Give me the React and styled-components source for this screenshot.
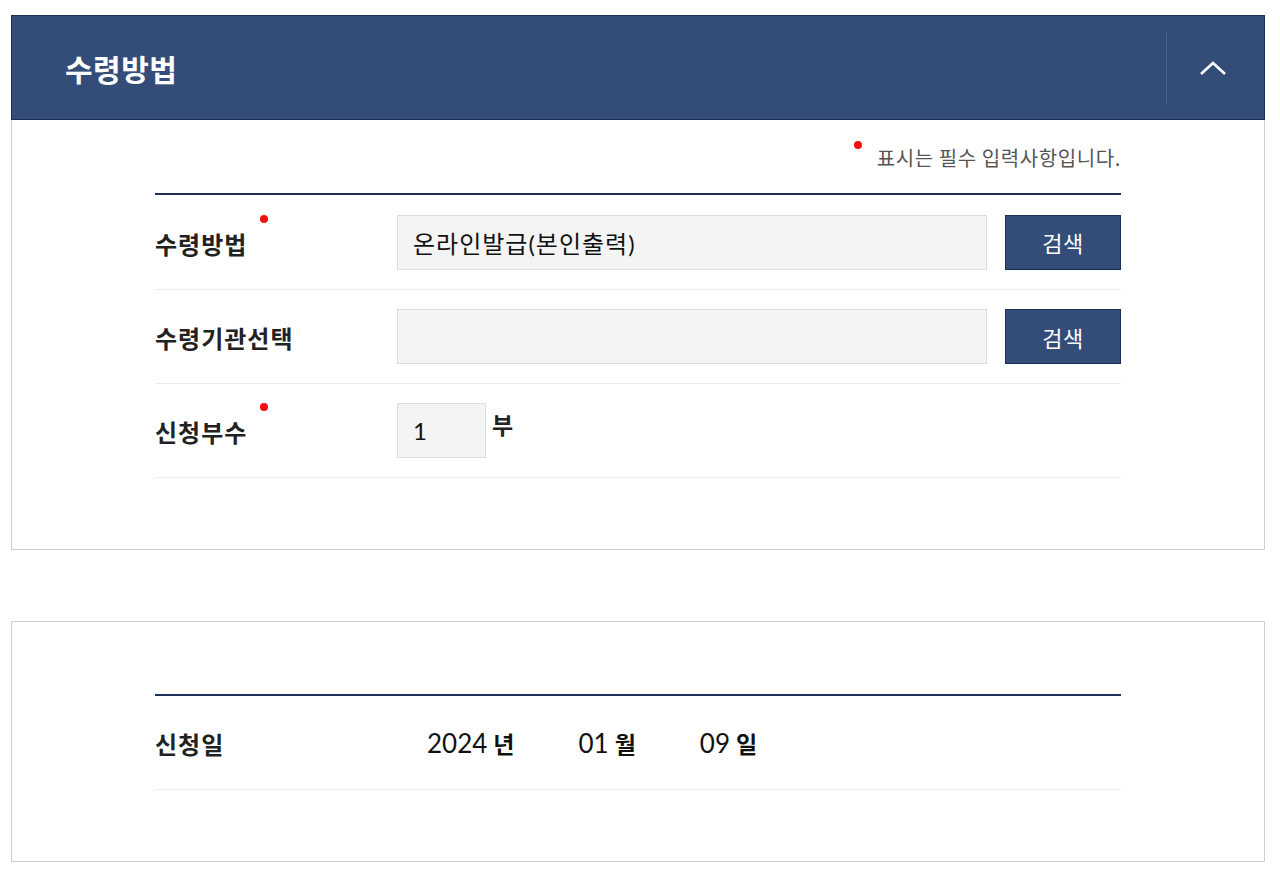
import React from 'react';
import styled, { createGlobalStyle } from 'styled-components';

const GlobalStyle = createGlobalStyle`
  body {
    margin: 0;
    background: #fff;
    font-family: "Lato", "Noto Sans CJK KR", sans-serif;
    color: #111;
  }
`;

const Page = styled.div`
  padding: 15px 15px 10px 11px;
  display: flex;
  flex-direction: column;
  gap: 71px;
`;

const Panel = styled.section`
  border: 1px solid #cfcfcf;
  border-top: ${p => (p.$hasHeader ? 'none' : '1px solid #cfcfcf')};
`;

const Header = styled.div`
  height: 105px;
  background: #344d78;
  border: 1px solid #1b2f55;
  margin: 0 -1px;
  display: flex;
  align-items: center;
  box-sizing: border-box;

  h2 {
    flex: 1;
    margin: 0;
    padding-left: 53px;
    color: #fff;
    font-family: "Noto Sans CJK KR", sans-serif;
    font-size: 30px;
    font-weight: 700;
    letter-spacing: 0.5px;
  }
`;

const Toggle = styled.button`
  width: 98px;
  height: 72px;
  border: none;
  border-left: 1px solid #47618a;
  background: transparent;
  display: flex;
  align-items: center;
  justify-content: center;
  padding: 0 6px 0 0;
  cursor: pointer;
`;

const Body = styled.div`
  width: 966px;
  margin: 0 auto;
  padding: ${p => (p.$top ? p.$top : '72px')} 0 71px;
`;

const Note = styled.p`
  margin: 0 0 19px;
  text-align: right;
  font-family: "Noto Sans CJK KR", sans-serif;
  font-size: 20px;
  color: #555;
  letter-spacing: 0.6px;
  line-height: 33px;
`;

const Dot = styled.span`
  display: inline-block;
  width: 8px;
  height: 8px;
  border-radius: 50%;
  background: #f01010;
  vertical-align: top;
  margin: 0 15px 0 0;
`;

const Table = styled.div`
  border-top: 2px solid #1d3158;
`;

const Row = styled.div`
  display: flex;
  align-items: center;
  min-height: ${p => p.$h || '94px'};
  border-bottom: 1px solid #ececec;
  box-sizing: border-box;
`;

const Label = styled.div`
  width: 242px;
  font-family: "Noto Sans CJK KR", sans-serif;
  font-size: 24px;
  font-weight: 700;
  letter-spacing: 1px;
  color: #222;
  display: flex;
  align-items: center;
  padding-top: 2px;
`;

const LabelText = styled.span`
  position: relative;
`;

const ReqDot = styled.span`
  position: absolute;
  right: -21px;
  top: -11px;
  width: 8px;
  height: 8px;
  border-radius: 50%;
  background: #f01010;
`;

const Field = styled.div`
  flex: 1;
  display: flex;
  align-items: center;
  gap: ${p => p.$gap || '18px'};
`;

const Input = styled.div`
  width: ${p => p.$w || '590px'};
  height: 55px;
  box-sizing: border-box;
  background: #f4f4f4;
  border: 1px solid #dcdcdc;
  display: flex;
  align-items: center;
  padding: 0 15px;
  font-size: 24px;
  letter-spacing: 1px;
  color: #111;
`;

const Button = styled.button`
  width: 116px;
  height: 55px;
  background: #344d78;
  border: 1px solid #1b2f55;
  color: #fff;
  font-family: "Noto Sans CJK KR", sans-serif;
  font-size: 22px;
  letter-spacing: 0.5px;
  padding: 0;
  cursor: pointer;
`;

const Unit = styled.span`
  font-family: "Noto Sans CJK KR", sans-serif;
  font-size: 23px;
  font-weight: 700;
  color: #222;
  align-self: flex-start;
  margin-top: 4px;
`;

const DateBox = styled.div`
  flex: 1;
  display: flex;
  align-items: center;
  padding-left: 30px;
  gap: 64px;
  font-size: 26px;
`;

const DatePart = styled.span`
  display: inline-flex;
  align-items: baseline;
  gap: 6px;
  b {
    font-family: "Noto Sans CJK KR", sans-serif;
    font-weight: 700;
    font-size: 23px;
  }
`;

const Chevron = () => (
  <svg width="28" height="16" viewBox="0 0 28 16" fill="none">
    <path d="M2 14 L14 3 L26 14" stroke="#fff" strokeWidth="2.6" />
  </svg>
);

const FieldLabel = ({ children, required }) => (
  <Label>
    <LabelText>
      {children}
      {required && <ReqDot />}
    </LabelText>
  </Label>
);

export default function App() {
  return (
    <>
      <GlobalStyle />
      <Page>
        <Panel $hasHeader>
          <Header>
            <h2>수령방법</h2>
            <Toggle aria-label="접기">
              <Chevron />
            </Toggle>
          </Header>
          <Body $top="21px">
            <Note>
              <Dot />
              표시는 필수 입력사항입니다.
            </Note>
            <Table>
              <Row $h="95px">
                <FieldLabel required>수령방법</FieldLabel>
                <Field>
                  <Input>온라인발급(본인출력)</Input>
                  <Button>검색</Button>
                </Field>
              </Row>
              <Row>
                <FieldLabel>수령기관선택</FieldLabel>
                <Field>
                  <Input />
                  <Button>검색</Button>
                </Field>
              </Row>
              <Row>
                <FieldLabel required>신청부수</FieldLabel>
                <Field $gap="6px">
                  <Input $w="89px">1</Input>
                  <Unit>부</Unit>
                </Field>
              </Row>
            </Table>
          </Body>
        </Panel>

        <Panel>
          <Body>
            <Table>
              <Row>
                <FieldLabel>신청일</FieldLabel>
                <DateBox>
                  <DatePart>2024 <b>년</b></DatePart>
                  <DatePart>01 <b>월</b></DatePart>
                  <DatePart>09 <b>일</b></DatePart>
                </DateBox>
              </Row>
            </Table>
          </Body>
        </Panel>
      </Page>
    </>
  );
}
